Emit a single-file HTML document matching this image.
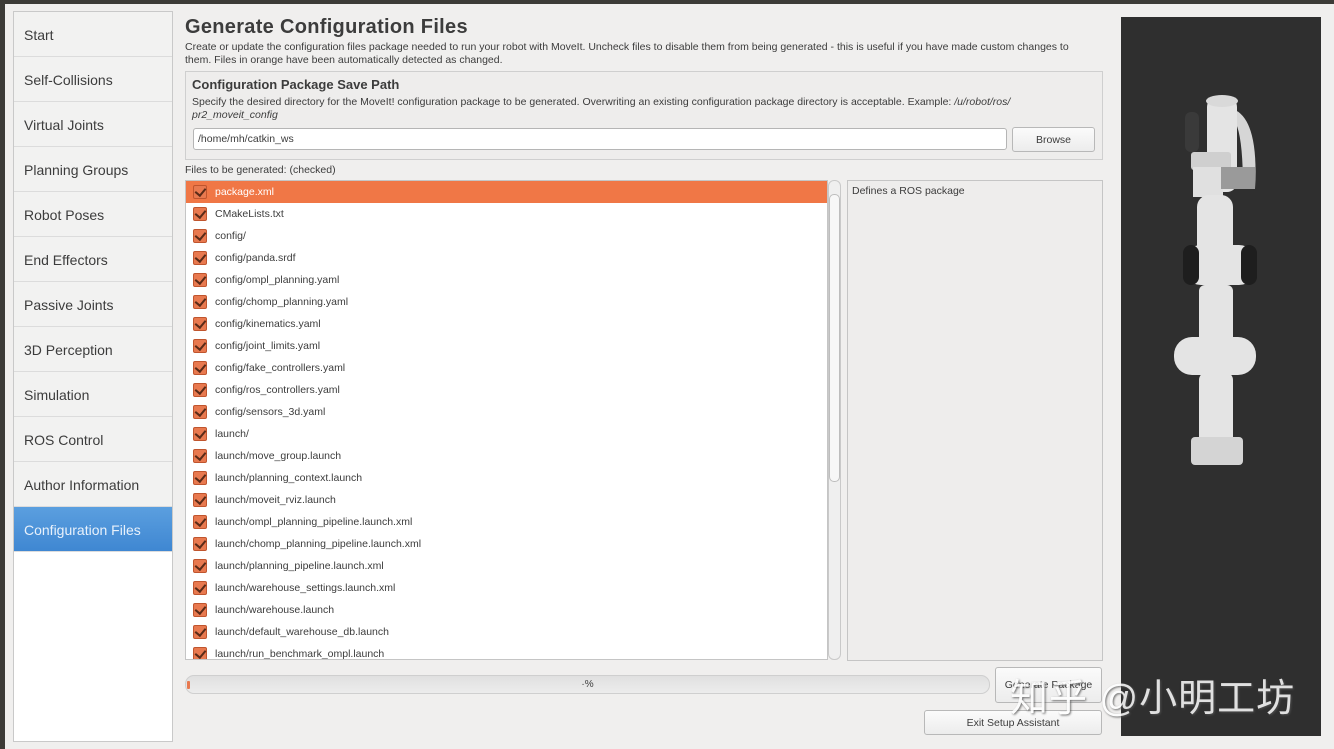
<!DOCTYPE html>
<html><head><meta charset="utf-8"><style>
*{box-sizing:border-box;margin:0;padding:0}
body{width:1334px;height:749px;background:#f0efee;font-family:"Liberation Sans",sans-serif;color:#3c3c3c;position:relative;overflow:hidden}
.abs{position:absolute}
#topbar{left:0;top:0;width:1334px;height:4px;background:#3c3b37}
#leftbar{left:0;top:0;width:5px;height:749px;background:#3c3b37}
#side{left:13px;top:11px;width:160px;height:731px;background:#fff;border:1px solid #c9c9c9}
.it{height:45px;border-bottom:1px solid #dcdcdc;background:#f2f2f1;padding-left:10px;line-height:47px;font-size:14px;color:#3c3c3c}
.it.sel{background:linear-gradient(#5b9fdf,#3f87d2);color:#e8f1fb}
h1{position:absolute;left:185px;top:16px;font-size:20px;font-weight:bold;color:#3c3c3c;letter-spacing:.3px}
.sm{font-size:10.5px;line-height:13px;color:#3c3c3c}
#grp{left:185px;top:71px;width:918px;height:89px;border:1px solid #cfcfcf;background:#eeedec}
.btn{border:1px solid #b8b8b8;border-radius:3px;background:linear-gradient(#fbfbfb,#ececec);font-size:10.5px;text-align:center;color:#3c3c3c}
#list{left:185px;top:180px;width:643px;height:480px;background:#fff;border:1px solid #c5c5c5;overflow:hidden}
.row{height:22px;line-height:22px;font-size:10.5px;padding-left:29px;position:relative;color:#3c3c3c}
.row.sel{background:#f07746;color:#fff}
.cb{position:absolute;left:7px;top:4px;width:14px;height:14px;background:#e8794f;border:1px solid #c0552e;border-radius:2px}
.cb:after{content:"";position:absolute;left:3px;top:0px;width:5px;height:8px;border:solid #5a2b18;border-width:0 2px 2px 0;transform:rotate(40deg)}
#sb{left:828px;top:180px;width:13px;height:480px;background:#efefef;border:1px solid #c9c9c9;border-radius:6px}
#thumb{left:829px;top:194px;width:11px;height:288px;background:#f7f7f7;border:1px solid #bdbdbd;border-radius:5px}
#desc{left:847px;top:180px;width:256px;height:481px;background:#eeedec;border:1px solid #c5c5c5;padding:4px;font-size:10.5px}
#prog{left:185px;top:675px;width:805px;height:19px;border:1px solid #cfcfcf;border-radius:9px;background:linear-gradient(#e0e0e0,#ececec);font-size:10px;text-align:center;line-height:18px}
#view{left:1121px;top:17px;width:200px;height:719px;background:#2f2f2f}
#wm{left:1010px;top:667px;font-family:"Liberation Sans","Noto Sans CJK SC",sans-serif;font-size:38px;color:#fff;opacity:.85;text-shadow:1px 1px 2px #555;letter-spacing:1px}
</style></head><body>
<div class="abs" id="topbar"></div><div class="abs" id="leftbar"></div>
<div class="abs" id="side">
<div class="it">Start</div><div class="it">Self-Collisions</div><div class="it">Virtual Joints</div><div class="it">Planning Groups</div><div class="it">Robot Poses</div><div class="it">End Effectors</div><div class="it">Passive Joints</div><div class="it">3D Perception</div><div class="it">Simulation</div><div class="it">ROS Control</div><div class="it">Author Information</div><div class="it sel">Configuration Files</div>
</div>
<h1>Generate Configuration Files</h1>
<div class="abs sm" style="left:185px;top:41px;width:895px">Create or update the configuration files package needed to run your robot with MoveIt. Uncheck files to disable them from being generated - this is useful if you have made custom changes to them. Files in orange have been automatically detected as changed.</div>
<div class="abs" id="grp">
<div class="abs" style="left:6px;top:5px;font-size:13px;font-weight:bold">Configuration Package Save Path</div>
<div class="abs sm" style="left:6px;top:24px;width:905px">Specify the desired directory for the MoveIt! configuration package to be generated. Overwriting an existing configuration package directory is acceptable. Example: <i>/u/robot/ros/ pr2_moveit_config</i></div>
<div class="abs" style="left:7px;top:56px;width:814px;height:22px;background:#fff;border:1px solid #b5b5b5;border-radius:3px;font-size:10.5px;line-height:20px;padding-left:4px">/home/mh/catkin_ws</div>
<div class="abs btn" style="left:826px;top:55px;width:83px;height:25px;line-height:25px">Browse</div>
</div>
<div class="abs sm" style="left:185px;top:164px">Files to be generated: (checked)</div>
<div class="abs" id="list">
<div class="row sel"><span class="cb"></span>package.xml</div>
<div class="row"><span class="cb"></span>CMakeLists.txt</div>
<div class="row"><span class="cb"></span>config/</div>
<div class="row"><span class="cb"></span>config/panda.srdf</div>
<div class="row"><span class="cb"></span>config/ompl_planning.yaml</div>
<div class="row"><span class="cb"></span>config/chomp_planning.yaml</div>
<div class="row"><span class="cb"></span>config/kinematics.yaml</div>
<div class="row"><span class="cb"></span>config/joint_limits.yaml</div>
<div class="row"><span class="cb"></span>config/fake_controllers.yaml</div>
<div class="row"><span class="cb"></span>config/ros_controllers.yaml</div>
<div class="row"><span class="cb"></span>config/sensors_3d.yaml</div>
<div class="row"><span class="cb"></span>launch/</div>
<div class="row"><span class="cb"></span>launch/move_group.launch</div>
<div class="row"><span class="cb"></span>launch/planning_context.launch</div>
<div class="row"><span class="cb"></span>launch/moveit_rviz.launch</div>
<div class="row"><span class="cb"></span>launch/ompl_planning_pipeline.launch.xml</div>
<div class="row"><span class="cb"></span>launch/chomp_planning_pipeline.launch.xml</div>
<div class="row"><span class="cb"></span>launch/planning_pipeline.launch.xml</div>
<div class="row"><span class="cb"></span>launch/warehouse_settings.launch.xml</div>
<div class="row"><span class="cb"></span>launch/warehouse.launch</div>
<div class="row"><span class="cb"></span>launch/default_warehouse_db.launch</div>
<div class="row"><span class="cb"></span>launch/run_benchmark_ompl.launch</div>
</div>
<div class="abs" id="sb"></div><div class="abs" id="thumb"></div>
<div class="abs" id="desc">Defines a ROS package</div>
<div class="abs" id="prog">·%<div class="abs" style="left:1px;top:5px;width:3px;height:8px;background:#e8794f;border-radius:1px"></div></div>
<div class="abs btn" style="left:995px;top:667px;width:107px;height:36px;line-height:34px">Generate Package</div>
<div class="abs btn" style="left:924px;top:710px;width:178px;height:25px;line-height:25px">Exit Setup Assistant</div>
<div class="abs" id="view">
<svg width="200" height="719" viewBox="0 0 200 719">
<g fill="#e4e4e4">
<path d="M112 92 q26 10 22 80 l-12 0 q0 -60 -10 -70z" fill="#d6d6d6"/>
<rect x="64" y="95" width="14" height="40" rx="6" fill="#3a3a3a"/>
<rect x="86" y="80" width="30" height="95" rx="10"/>
<ellipse cx="101" cy="84" rx="16" ry="6" fill="#d9d9d9"/>
<rect x="70" y="135" width="40" height="18" rx="3" fill="#cfcfcf"/>
<rect x="72" y="150" width="30" height="30" fill="#e0e0e0"/>
<rect x="100" y="150" width="34" height="22" fill="#9a9a9a"/>
<rect x="76" y="178" width="36" height="80" rx="12"/>
<rect x="62" y="228" width="74" height="40" rx="18"/>
<rect x="62" y="228" width="16" height="40" rx="8" fill="#1e1e1e"/>
<rect x="120" y="228" width="16" height="40" rx="8" fill="#1e1e1e"/>
<rect x="78" y="268" width="34" height="60" rx="6"/>
<path d="M80 300 q30 -5 30 40 l-22 0 q-8 -20 -8 -40z"/>
<rect x="53" y="320" width="82" height="38" rx="18"/>
<rect x="78" y="355" width="34" height="80" rx="8"/>
<rect x="70" y="420" width="52" height="28" rx="4" fill="#d4d4d4"/>
</g>
</svg>
</div>
<div class="abs" id="wm">知乎 @小明工坊</div>
</body></html>
